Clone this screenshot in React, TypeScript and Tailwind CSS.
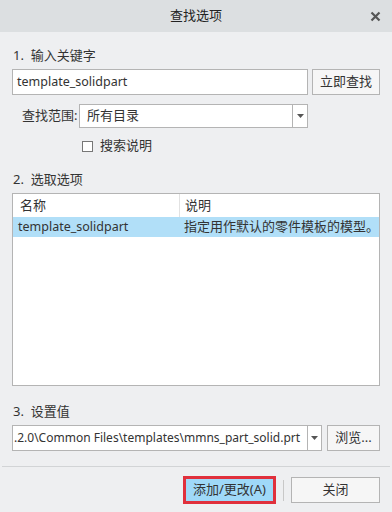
export default function App() {
  return (
    <div
      className="w-[392px] h-[512px] bg-[#eeeff1] text-[#333] text-[13px] flex flex-col overflow-hidden"
      style={{ fontFamily: '"Noto Sans", "Noto Sans CJK SC", sans-serif' }}
    >
      {/* title bar */}
      <div className="h-[32px] bg-[#dcdfe1] relative flex items-center justify-center shrink-0">
        <span className="text-[13px] text-[#222]">查找选项</span>
        <span className="absolute right-[10px] top-[9px] w-[14px] h-[14px] flex items-center justify-center">
          <svg width="11" height="11" viewBox="0 0 11 11">
            <path d="M1.5 1.5 L9.5 9.5 M9.5 1.5 L1.5 9.5" stroke="#555" strokeWidth="2.2" />
          </svg>
        </span>
      </div>

      <div className="flex flex-col px-[12px]">
        {/* 1 */}
        <div className="mt-[13px] h-[20px] leading-[20px] pl-[1px]">1.&nbsp; 输入关键字</div>
        <div className="mt-[4px] flex gap-[4px] h-[26px]">
          <div className="flex-1 bg-white border border-[#b4b4b4] px-[4px] flex items-center text-[12.5px]">template_solidpart</div>
          <button className="w-[68px] border border-[#b4b4b4] bg-[#f6f6f6] flex items-center justify-center">立即查找</button>
        </div>

        <div className="mt-[9px] flex items-center h-[24px]">
          <span className="w-[67px] pl-[10px]">查找范围:</span>
          <div className="w-[229px] h-full bg-white border border-[#b4b4b4] flex">
            <div className="flex-1 px-[7px] flex items-center">所有目录</div>
            <div className="w-[15px] border-l border-[#b4b4b4] flex items-center justify-center">
              <svg width="7" height="4" viewBox="0 0 7 4">
                <path d="M0 0 H7 L3.5 4 Z" fill="#555" />
              </svg>
            </div>
          </div>
        </div>

        <div className="mt-[12px] flex items-center h-[12px] pl-[70px]">
          <span className="w-[11px] h-[11px] border border-[#777] bg-white" />
          <span className="ml-[7px]">搜索说明</span>
        </div>

        {/* 2 */}
        <div className="mt-[17px] h-[20px] leading-[20px] pl-[1px]">2.&nbsp; 选取选项</div>
        <div className="mt-[4px] h-[193px] bg-white border border-[#b4b4b4] flex flex-col">
          <div className="flex h-[23px] shrink-0">
            <div className="w-[167px] border-r border-[#e2e2e2] pl-[7px] flex items-center">名称</div>
            <div className="flex-1 pl-[5px] flex items-center">说明</div>
          </div>
          <div className="flex h-[20px] bg-[#b1dff8] shrink-0">
            <div className="w-[167px] pl-[5px] flex items-center text-[12.5px]">template_solidpart</div>
            <div className="flex-1 pl-[4px] flex items-center whitespace-nowrap overflow-hidden">指定用作默认的零件模板的模型。</div>
          </div>
        </div>

        {/* 3 */}
        <div className="mt-[15px] h-[20px] leading-[20px] pl-[1px]">3.&nbsp; 设置值</div>
        <div className="mt-[4px] flex gap-[5px] h-[26px]">
          <div className="w-[310px] bg-white border border-[#b4b4b4] flex">
            <div className="flex-1 flex items-center overflow-hidden whitespace-nowrap pl-[1px] text-[12px]">.2.0\Common Files\templates\mmns_part_solid.prt</div>
            <div className="w-[14px] border-l border-[#b4b4b4] flex items-center justify-center">
              <svg width="7" height="4" viewBox="0 0 7 4">
                <path d="M0 0 H7 L3.5 4 Z" fill="#555" />
              </svg>
            </div>
          </div>
          <button className="flex-1 border border-[#b4b4b4] bg-[#f6f6f6] flex items-center justify-center">浏览...</button>
        </div>
      </div>

      <div className="mt-[15px] mx-[2px] h-px bg-[#d2d4d6]" />

      <div className="mt-[9px] flex items-center justify-end pr-[12px] h-[28px]">
        <button className="w-[93px] h-[28px] border-[3px] border-[#e0303c] bg-[#9fd9f8] flex items-center justify-center">添加/更改(A)</button>
        <span className="mx-[7px] w-px h-[21px] bg-[#c8c8c8]" />
        <button className="w-[89px] h-[26px] border border-[#b4b4b4] bg-[#f6f6f6] flex items-center justify-center">关闭</button>
      </div>
    </div>
  );
}
